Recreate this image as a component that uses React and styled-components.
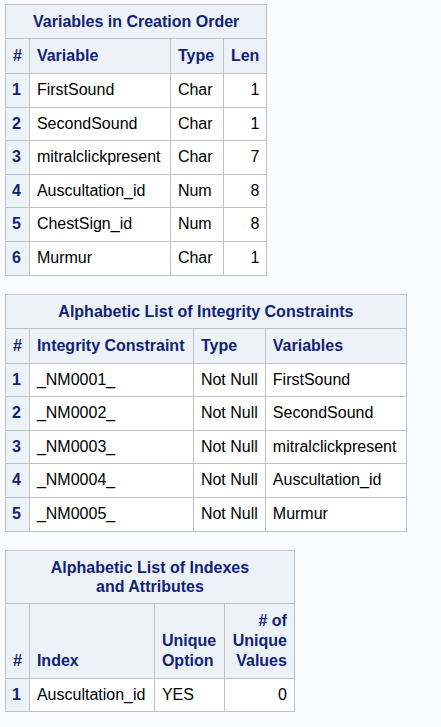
import styled, { createGlobalStyle } from "styled-components";

const GlobalStyle = createGlobalStyle`
    html, body {
        margin: 0;
        background-color: #fafbfe;
    }
    body {
        font-family: "Liberation Sans", Arial, sans-serif;
        font-size: 16px;
    }
`

const Page = styled.div`
    display: flex;
    flex-direction: column;
    align-items: flex-start;
    gap: 18px;
    padding: 4px 5px;
`

const Table = styled.table`
    border-collapse: collapse;
    table-layout: fixed;
    border: 1px solid #c1c1c1;
    background-color: #ffffff;
    line-height: 18.6px;
`

const Col = styled.col`
    width: ${(props) => props.$w}px;
`

const TitleCell = styled.th`
    background-color: #edf2f9;
    color: #112277;
    font-weight: bold;
    text-align: center;
    padding: 7px 8px;
    line-height: 19px;
    border: 1px solid #c1c1c1;
`

const HeadCell = styled.th`
    background-color: #edf2f9;
    color: #112277;
    font-weight: bold;
    text-align: ${(props) => props.$align || "left"};
    vertical-align: bottom;
    padding: 7px;
    line-height: 20px;
    border: 1px solid #c1c1c1;
`

const RowHead = styled.th`
    background-color: #edf2f9;
    color: #112277;
    font-weight: bold;
    text-align: left;
    padding: 7px 6px;
    border: 1px solid #c1c1c1;
`

const Cell = styled.td`
    color: #000000;
    text-align: ${(props) => props.$align || "left"};
    white-space: nowrap;
    padding: 7px;
    border: 1px solid #c1c1c1;
`

function OutputTable({ title, columns, rows }) {
    return (
        <Table>
            <colgroup>
                {columns.map((col, i) => <Col key={i} $w={col.width} />)}
            </colgroup>
            <thead>
                <tr>
                    <TitleCell colSpan={columns.length}>{title}</TitleCell>
                </tr>
                <tr>
                    {columns.map((col, i) => (
                        <HeadCell key={i} $align={col.align}>{col.label}</HeadCell>
                    ))}
                </tr>
            </thead>
            <tbody>
                {rows.map((row, r) => (
                    <tr key={r}>
                        <RowHead>{r + 1}</RowHead>
                        {row.map((value, c) => (
                            <Cell key={c} $align={columns[c + 1].align}>{value}</Cell>
                        ))}
                    </tr>
                ))}
            </tbody>
        </Table>
    )
}

const variables = [
    ["FirstSound", "Char", 1],
    ["SecondSound", "Char", 1],
    ["mitralclickpresent", "Char", 7],
    ["Auscultation_id", "Num", 8],
    ["ChestSign_id", "Num", 8],
    ["Murmur", "Char", 1],
]

const constraints = [
    ["_NM0001_", "Not Null", "FirstSound"],
    ["_NM0002_", "Not Null", "SecondSound"],
    ["_NM0003_", "Not Null", "mitralclickpresent"],
    ["_NM0004_", "Not Null", "Auscultation_id"],
    ["_NM0005_", "Not Null", "Murmur"],
]

const indexes = [
    ["Auscultation_id", "YES", 0],
]

export default function App() {
    return (
        <Page>
            <GlobalStyle />
            <OutputTable
                title="Variables in Creation Order"
                columns={[
                    { label: "#", width: 23 },
                    { label: "Variable", width: 141 },
                    { label: "Type", width: 53 },
                    { label: "Len", width: 43, align: "right" },
                ]}
                rows={variables}
            />
            <OutputTable
                title="Alphabetic List of Integrity Constraints"
                columns={[
                    { label: "#", width: 23 },
                    { label: "Integrity Constraint", width: 164 },
                    { label: "Type", width: 71 },
                    { label: "Variables", width: 141 },
                ]}
                rows={constraints}
            />
            <OutputTable
                title={<>Alphabetic List of Indexes<br />and Attributes</>}
                columns={[
                    { label: "#", width: 23 },
                    { label: "Index", width: 125 },
                    { label: "Unique Option", width: 70 },
                    { label: "# of Unique Values", width: 70, align: "right" },
                ]}
                rows={indexes}
            />
        </Page>
    )
}
